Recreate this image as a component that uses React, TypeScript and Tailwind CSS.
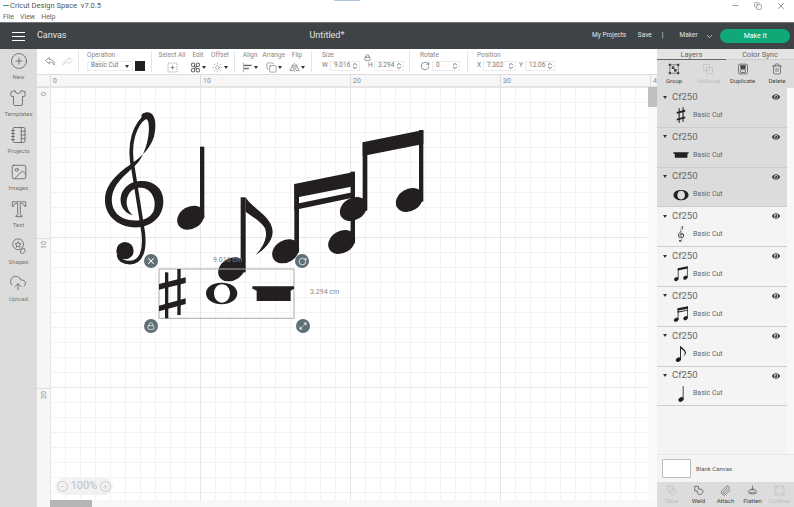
import type { ReactNode } from 'react'
import { ChevronDown, ChevronsUpDown, CirclePlus, CloudUpload, Copy, Image, Lock, Maximize2, Minus, NotebookTabs, Paperclip, Plus, RotateCw, Shirt, Trash2, X, Sun } from 'lucide-react'
import { FaEye } from 'react-icons/fa'

type IconProps = { className?: string; strokeWidth?: number }

const UndoOutline = ({ className, flip }: IconProps & { flip?: boolean }) => (
  <svg className={className} viewBox="0 0 16 16" fill="none" stroke="currentColor" strokeWidth="1">
    <path d={flip ? 'M14 6L9 2V4.5C5 4.5 2 7 2 12C4 9 6 8 9 8V10.5Z' : 'M2 6L7 2V4.5C11 4.5 14 7 14 12C12 9 10 8 7 8V10.5Z'} strokeLinejoin="round" />
  </svg>
)

const SelectAllIcon = ({ className }: IconProps) => (
  <svg className={className} viewBox="0 0 16 16" fill="none" stroke="currentColor">
    <rect x="1.5" y="1.5" width="13" height="13" strokeDasharray="2 1.5" strokeWidth="0.8" />
    <path d="M8 5V11M5 8H11" strokeWidth="1" />
  </svg>
)

const EditIcon = ({ className }: IconProps) => (
  <svg className={className} viewBox="0 0 16 16" fill="none" stroke="currentColor" strokeWidth="1.5">
    <circle cx="4.5" cy="4" r="2.5" />
    <circle cx="11.5" cy="4" r="2.5" />
    <circle cx="4.5" cy="12" r="2.5" />
    <circle cx="11.5" cy="12" r="2.5" />
    <path d="M6 6L10 10M10 6L6 10" />
  </svg>
)

const AlignIcon = ({ className }: IconProps) => (
  <svg className={className} viewBox="0 0 16 16" fill="none" stroke="currentColor">
    <path d="M2 1V15" strokeWidth="0.8" />
    <path d="M3 5H14" strokeWidth="2" />
    <path d="M3 9.5H10" strokeWidth="2" />
  </svg>
)

const FlipIcon = ({ className }: IconProps) => (
  <svg className={className} viewBox="0 0 16 16" fill="none" stroke="currentColor" strokeWidth="0.9">
    <path d="M6 3.5L1 12.5H6ZM10 3.5L15 12.5H10Z" strokeLinejoin="round" />
    <path d="M8 1V15" strokeDasharray="1.5 1.5" />
  </svg>
)

const TextIcon = ({ className }: IconProps) => (
  <svg className={className} viewBox="0 0 20 20" fill="none" stroke="currentColor" strokeWidth="0.8">
    <path d="M2.5 2H17.5V7H16C15.5 4.5 14.5 3.5 11.5 3.5V16C11.5 17 12 17.3 13.5 17.5V18.5H6.5V17.5C8 17.3 8.5 17 8.5 16V3.5C5.5 3.5 4.5 4.5 4 7H2.5Z" strokeLinejoin="round" />
  </svg>
)

const ShapesIcon = ({ className }: IconProps) => (
  <svg className={className} viewBox="0 0 20 20" fill="none" stroke="currentColor" strokeWidth="0.8">
    <circle cx="9" cy="8" r="6" />
    <path d="M9 5L10 7.2L12.3 7.5L10.6 9.1L11 11.4L9 10.3L7 11.4L7.4 9.1L5.7 7.5L8 7.2Z" />
    <path d="M12 14L16 12.5L17 15.5L14.5 18.5L11.5 17Z" strokeLinejoin="round" />
  </svg>
)

const GroupIcon = ({ className }: IconProps) => (
  <svg className={className} viewBox="0 0 16 16" fill="none" stroke="currentColor">
    <rect x="2.5" y="2.5" width="11" height="11" strokeWidth="0.8" />
    <path d="M1 1H4V4H1ZM12 1H15V4H12ZM1 12H4V15H1ZM12 12H15V15H12Z" fill="currentColor" stroke="none" />
    <rect x="5" y="4.5" width="3.5" height="3.5" fill="currentColor" stroke="none" />
    <rect x="8" y="8" width="3.5" height="3.5" fill="currentColor" stroke="none" />
  </svg>
)

const UngroupIcon = ({ className }: IconProps) => (
  <svg className={className} viewBox="0 0 16 16" fill="none" stroke="currentColor" strokeWidth="0.8">
    <rect x="2" y="2" width="8" height="8" />
    <rect x="6" y="6" width="8" height="8" />
  </svg>
)

const DuplicateIcon = ({ className }: IconProps) => (
  <svg className={className} viewBox="0 0 16 16" fill="none" stroke="currentColor" strokeWidth="0.9">
    <rect x="2" y="1.5" width="12" height="13" rx="2" />
    <rect x="5" y="3.5" width="6" height="4" fill="currentColor" />
    <rect x="5" y="9" width="6" height="3.5" />
  </svg>
)

const SliceIcon = ({ className }: IconProps) => (
  <svg className={className} viewBox="0 0 16 16" fill="none" stroke="currentColor" strokeWidth="0.9">
    <rect x="2" y="2" width="8" height="8" rx="1" />
    <circle cx="10" cy="10" r="4.5" />
  </svg>
)

const WeldIcon = ({ className }: IconProps) => (
  <svg className={className} viewBox="0 0 16 16" fill="none" stroke="currentColor" strokeWidth="1">
    <path d="M2.5 2H8V6H11C14 6 15 9 14 11C13 14 9 15 7.5 13C6.5 11.5 6 10 6 8.5H2.5Z" strokeLinejoin="round" />
  </svg>
)

const FlattenIcon = ({ className }: IconProps) => (
  <svg className={className} viewBox="0 0 16 16" fill="none" stroke="currentColor" strokeWidth="0.9">
    <path d="M8 1V7M6 5L8 7.5L10 5" />
    <ellipse cx="8" cy="9" rx="6" ry="2.2" />
    <path d="M2 11.5C3 13.5 13 13.5 14 11.5" />
  </svg>
)

const ContourIcon = ({ className }: IconProps) => (
  <svg className={className} viewBox="0 0 16 16" fill="none" stroke="currentColor" strokeWidth="0.9">
    <rect x="1.5" y="1.5" width="13" height="13" />
    <path d="M1.5 1.5L6 6M14.5 1.5L10 6M1.5 14.5L6 10M14.5 14.5L10 10" />
  </svg>
)

const Clef = () => (
  <g>
    <path d="M165 38C195 30 202 70 192 110C178 155 140 180 105 205C70 232 42 265 45 305C48 355 95 385 145 382C190 378 222 345 220 300C218 260 185 240 150 243C115 245 90 270 92 305C94 325 110 342 128 345C110 330 105 305 115 285C125 265 150 258 170 268C192 280 200 310 190 335C175 362 135 368 100 355C70 342 60 310 68 280C78 240 120 215 146 185C168 155 180 105 176 72C174 56 168 54 160 64C150 45 155 40 165 38Z" fill="#231f20" />
    <path d="M172 44C135 70 112 130 130 210L160 400C165 450 155 486 120 488C100 488 88 480 85 465" fill="none" stroke="#231f20" strokeWidth="11" />
    <circle cx="105" cy="452" r="26" fill="#231f20" />
  </g>
)

const Head = ({ cx, cy }: { cx: number; cy: number }) => (
  <ellipse cx={cx} cy={cy} rx="43" ry="33" transform={`rotate(-32 ${cx} ${cy})`} fill="#231f20" />
)

const Quarter = () => (
  <g>
    <rect x="330" y="140" width="13" height="215" fill="#231f20" />
    <Head cx={302} cy={353} />
  </g>
)

const Eighth = () => (
  <g>
    <rect x="452" y="292" width="15" height="225" fill="#231f20" />
    <path d="M467 292C480 320 548 350 548 395C548 425 520 450 497 465C520 440 535 410 525 385C515 365 480 345 467 335Z" fill="#231f20" />
    <Head cx={425} cy={508} />
  </g>
)

const Beam16 = () => (
  <g>
    <rect x="613" y="252" width="14" height="205" fill="#231f20" />
    <rect x="782" y="215" width="13" height="215" fill="#231f20" />
    <path d="M613 252L795 215V258L627 291V310L795 275V292L613 330Z" fill="#231f20" />
    <Head cx={587} cy={454} />
    <Head cx={755} cy={426} />
  </g>
)

const Beam8 = () => (
  <g>
    <rect x="818" y="127" width="14" height="205" fill="#231f20" />
    <rect x="987" y="90" width="13" height="215" fill="#231f20" />
    <path d="M818 127L1000 90V132L818 168Z" fill="#231f20" />
    <Head cx={790} cy={327} />
    <Head cx={958} cy={300} />
  </g>
)

const Sharp = () => (
  <g fill="#231f20">
    <rect x="225" y="517" width="10" height="138" />
    <rect x="262" y="507" width="10" height="138" />
    <path d="M207 552L287 532V549L207 569Z" />
    <path d="M207 617L287 595V612L207 634Z" />
  </g>
)

const OShape = () => (
  <path
    fillRule="evenodd"
    d="M348 580C348 560 370 548 395 548C420 548 442 560 442 580C442 600 420 613 395 613C370 613 348 600 348 580ZM372 580C372 595 382 608 396 608C410 608 420 595 420 580C420 565 410 553 396 553C382 553 372 565 372 580Z"
    fill="#231f20"
  />
)

const Cap = () => <path d="M487 559H612V566L602 572V603H500V572L487 566Z" fill="#231f20" />

const layers: { thumb: ReactNode; box: string; selected: boolean }[] = [
  { thumb: <Sharp />, box: '205 505 85 152', selected: true },
  { thumb: <Cap />, box: '485 520 130 122', selected: true },
  { thumb: <OShape />, box: '345 530 100 100', selected: true },
  { thumb: <Clef />, box: '40 30 185 465', selected: false },
  { thumb: <Beam8 />, box: '750 85 255 295', selected: false },
  { thumb: <Beam16 />, box: '545 210 255 285', selected: false },
  { thumb: <Eighth />, box: '385 290 165 255', selected: false },
  { thumb: <Quarter />, box: '260 138 85 255', selected: false },
]

const sideItems = [
  { label: 'New', icon: CirclePlus },
  { label: 'Templates', icon: Shirt },
  { label: 'Projects', icon: NotebookTabs },
  { label: 'Images', icon: Image },
  { label: 'Text', icon: TextIcon },
  { label: 'Shapes', icon: ShapesIcon },
  { label: 'Upload', icon: CloudUpload },
]

const panelActions = [
  { label: 'Group', icon: GroupIcon, off: false },
  { label: 'UnGroup', icon: UngroupIcon, off: true },
  { label: 'Duplicate', icon: DuplicateIcon, off: false },
  { label: 'Delete', icon: Trash2, off: false },
]

const bottomActions = [
  { label: 'Slice', icon: SliceIcon, off: true },
  { label: 'Weld', icon: WeldIcon, off: false },
  { label: 'Attach', icon: Paperclip, off: false },
  { label: 'Flatten', icon: FlattenIcon, off: false },
  { label: 'Contour', icon: ContourIcon, off: true },
]

function Stepper({ value, width }: { value: string; width: string }) {
  return (
    <div className={`flex h-[10px] items-center justify-between border border-[#ececec] pl-[3px] text-[6.5px] text-[#777] ${width}`}>
      <span>{value}</span>
      <ChevronsUpDown className="h-[8px] w-[8px] text-[#555]" strokeWidth={2.5} />
    </div>
  )
}

function Tool({ label, children, width }: { label: string; children: ReactNode; width: string }) {
  return (
    <div className={`flex flex-col items-center gap-[2px] ${width}`}>
      <span className="h-[9px] whitespace-nowrap text-[6.5px] leading-[9px] text-[#888]">{label}</span>
      <div className="flex h-[12px] items-center text-[#666]">{children}</div>
    </div>
  )
}

const Caret = () => <span className="ml-[1px] h-0 w-0 border-x-[2px] border-t-[3px] border-x-transparent border-t-[#333]" />

function Handle({ pos, children }: { pos: string; children: ReactNode }) {
  return (
    <div className={`absolute flex h-[14px] w-[14px] items-center justify-center rounded-full bg-[#5f6f78] text-white ${pos}`}>
      {children}
    </div>
  )
}

export default function App() {
  return (
    <div className="relative flex h-[507px] w-[794px] flex-col overflow-hidden bg-white font-[Roboto,sans-serif]">
      {/* window chrome */}
      <div className="absolute left-[334px] top-0 h-[1px] w-[26px] bg-[#a9c6de]" />
      <div className="flex h-[22px] flex-col px-[3px]">
        <div className="flex h-[13px] items-center">
          <span className="mr-[1px] h-[1px] w-[6px] bg-[#19a97b]" />
          <span className="whitespace-pre text-[7.5px] text-[#555]">Cricut Design Space  v7.0.5</span>
          <div className="ml-auto flex items-center gap-[14px] pr-[5px] text-[#555]">
            <Minus className="h-[9px] w-[9px]" strokeWidth={1.5} />
            <Copy className="h-[8px] w-[8px]" strokeWidth={1.5} />
            <X className="h-[10px] w-[10px]" strokeWidth={1.5} />
          </div>
        </div>
        <div className="flex gap-[6px] text-[7px] text-[#666]">
          <span>File</span>
          <span>View</span>
          <span>Help</span>
        </div>
      </div>

      {/* header */}
      <div className="flex h-[27px] items-center border-t border-[#777] bg-[#3e4347] pl-[12px] pr-[4px] text-[#e4e4e4]">
        <div className="flex h-[9px] w-[13px] flex-col justify-between">
          <span className="h-[1px] bg-white" />
          <span className="h-[1px] bg-white" />
          <span className="h-[1px] bg-white" />
        </div>
        <span className="ml-[12px] w-[274px] text-[9px]">Canvas</span>
        <span className="w-[284px] text-[9px]">Untitled*</span>
        <span className="w-[46px] text-[6.5px]">My Projects</span>
        <span className="w-[24px] text-[6.5px]">Save</span>
        <span className="w-[18px] text-[6.5px]">|</span>
        <span className="w-[26px] text-[6.5px]">Maker</span>
        <ChevronDown className="h-[9px] w-[9px]" />
        <button className="ml-[6px] h-[14px] w-[70px] rounded-full bg-[#0fa876] text-[7px] text-white">Make It</button>
      </div>

      <div className="flex min-h-0 flex-1">
        {/* left sidebar */}
        <div className="flex w-[37px] flex-col items-center bg-[#dcdcdc] pt-[3px]">
          {sideItems.map((item) => (
            <div key={item.label} className="flex h-[37px] flex-col items-center">
              <item.icon className="h-[18px] w-[18px] text-[#555]" strokeWidth={1} />
              <span className="mt-[3px] text-[6px] leading-[8px] text-[#777]">{item.label}</span>
            </div>
          ))}
        </div>

        {/* centre */}
        <div className="flex min-w-0 flex-1 flex-col">
          <div className="flex h-[26px] items-center border-b border-[#ddd] text-[7px]">
            <div className="flex h-[21px] w-[42px] items-center gap-[6px] border-r border-[#e4e4e4] pl-[7px]">
              <UndoOutline className="h-[12px] w-[12px] text-[#777]" />
              <UndoOutline flip className="h-[12px] w-[12px] text-[#ccc]" />
            </div>
            <div className="flex h-[21px] w-[73px] flex-col gap-[1px] border-r border-[#e4e4e4] pl-[8px]">
              <span className="h-[9px] text-[6.5px] leading-[9px] text-[#888]">Operation</span>
              <div className="flex items-center gap-[2px]">
                <div className="flex h-[10px] w-[46px] items-center justify-between border border-[#ececec] px-[3px] text-[6.5px] text-[#777]">
                  Basic Cut
                  <Caret />
                </div>
                <div className="h-[10px] w-[10px] bg-[#231f20]" />
              </div>
            </div>
            <div className="flex h-[21px] w-[83px] border-r border-[#e4e4e4] pl-[5px]">
              <Tool label="Select All" width="w-[30px]">
                <SelectAllIcon className="h-[11px] w-[11px]" />
              </Tool>
              <Tool label="Edit" width="w-[22px]">
                <EditIcon className="h-[11px] w-[11px]" />
                <Caret />
              </Tool>
              <Tool label="Offset" width="w-[22px]">
                <Sun className="h-[11px] w-[11px]" strokeWidth={1} />
                <Caret />
              </Tool>
            </div>
            <div className="flex h-[21px] w-[77px] border-r border-[#e4e4e4] pl-[5px]">
              <Tool label="Align" width="w-[20px]">
                <AlignIcon className="h-[11px] w-[11px]" />
                <Caret />
              </Tool>
              <Tool label="Arrange" width="w-[27px]">
                <Copy className="h-[11px] w-[11px]" strokeWidth={1.25} />
                <Caret />
              </Tool>
              <Tool label="Flip" width="w-[20px]">
                <FlipIcon className="h-[11px] w-[11px]" />
                <Caret />
              </Tool>
            </div>
            <div className="relative flex h-[21px] w-[98px] flex-col gap-[1px] border-r border-[#e4e4e4] pl-[10px]">
              <span className="h-[9px] text-[6.5px] leading-[9px] text-[#888]">Size</span>
              <div className="flex items-center text-[6.5px] text-[#777]">
                <span className="w-[8px]">W</span>
                <Stepper value="9.016" width="w-[30px]" />
                <span className="ml-[8px] w-[6px]">H</span>
                <Stepper value="3.294" width="w-[30px]" />
              </div>
              <Lock className="absolute left-[52px] top-[3px] h-[7px] w-[7px] text-[#555]" />
            </div>
            <div className="flex h-[21px] w-[58px] flex-col gap-[1px] border-r border-[#e4e4e4] pl-[10px]">
              <span className="h-[9px] text-[6.5px] leading-[9px] text-[#888]">Rotate</span>
              <div className="flex items-center gap-[2px]">
                <RotateCw className="h-[10px] w-[10px] text-[#555]" strokeWidth={1.5} />
                <Stepper value="0" width="w-[28px]" />
              </div>
            </div>
            <div className="flex h-[21px] flex-1 flex-col gap-[1px] pl-[9px]">
              <span className="h-[9px] text-[6.5px] leading-[9px] text-[#888]">Position</span>
              <div className="flex items-center text-[6.5px] text-[#777]">
                <span className="w-[6px]">X</span>
                <Stepper value="7.302" width="w-[33px]" />
                <span className="ml-[3px] w-[6px]">Y</span>
                <Stepper value="12.06" width="w-[30px]" />
              </div>
            </div>
          </div>

          {/* top ruler */}
          <div className="flex h-[12px] overflow-hidden border-b border-[#e4e4e4] bg-[#f6f6f6] pl-[13px] text-[7px] leading-[12px] text-[#888]">
            {['0', '10', '20', '30', '40'].map((n) => (
              <span key={n} className="w-[150px] shrink-0 border-l border-[#ddd] pl-[2px]">
                {n}
              </span>
            ))}
          </div>

          <div className="flex min-h-0 flex-1">
            {/* left ruler */}
            <div className="flex w-[13px] flex-col overflow-hidden bg-[#f6f6f6] text-[7px] text-[#888]">
              {['0', '10', '20'].map((n) => (
                <span key={n} className="h-[150.5px] shrink-0 border-t border-[#ddd] pt-[2px] text-center leading-[8px]">
                  <span className="inline-block -rotate-90">{n}</span>
                </span>
              ))}
            </div>

            <div className="flex min-w-0 flex-1 flex-col">
              <div className="flex min-h-0 flex-1">
                {/* canvas */}
                <div className="relative min-w-0 flex-1 overflow-hidden bg-white bg-[linear-gradient(#e6e6e6_1px,transparent_1px),linear-gradient(90deg,#e6e6e6_1px,transparent_1px),linear-gradient(#f3f3f3_1px,transparent_1px),linear-gradient(90deg,#f3f3f3_1px,transparent_1px)] bg-size-[150px_150px,150px_150px,15px_15px,15px_15px]">
                  <svg className="absolute left-[40px] top-[13px] h-[240px] w-[350px]" viewBox="0 0 1050 720">
                    <Clef />
                    <Quarter />
                    <Eighth />
                    <Beam16 />
                    <Beam8 />
                    <rect x="207" y="507" width="405" height="148" fill="none" stroke="#aaa" strokeWidth="3" />
                    <Sharp />
                    <OShape />
                    <Cap />
                  </svg>
                  <span className="absolute left-[163px] top-[168px] text-[7px] text-[#888]">9.016 cm</span>
                  <span className="absolute left-[260px] top-[200px] text-[7px] text-[#888]">3.294 cm</span>
                  <Handle pos="left-[94px] top-[167px]">
                    <X className="h-[10px] w-[10px]" strokeWidth={2.5} />
                  </Handle>
                  <Handle pos="left-[245px] top-[167px]">
                    <RotateCw className="h-[9px] w-[9px]" strokeWidth={2} />
                  </Handle>
                  <Handle pos="left-[94px] top-[232px]">
                    <Lock className="h-[8px] w-[8px]" strokeWidth={2} />
                  </Handle>
                  <Handle pos="left-[246px] top-[232px]">
                    <Maximize2 className="h-[8px] w-[8px]" strokeWidth={2.5} />
                  </Handle>
                  <div className="absolute bottom-[5px] left-[5px] flex h-[17px] w-[58px] items-center justify-between rounded-full bg-[#efefef]/80 px-[2px] text-[#c0c0c0]">
                    <span className="flex h-[11px] w-[11px] items-center justify-center rounded-full border border-[#ccc]">
                      <Minus className="h-[7px] w-[7px]" />
                    </span>
                    <span className="text-[11px]">100%</span>
                    <span className="flex h-[11px] w-[11px] items-center justify-center rounded-full border border-[#ccc]">
                      <Plus className="h-[7px] w-[7px]" />
                    </span>
                  </div>
                </div>
                <div className="w-[9px] bg-[#fafafa]">
                  <div className="h-[20px] bg-[#c0c0c0]" />
                </div>
              </div>
              <div className="h-[7px] bg-[#f8f8f8]">
                <div className="h-[7px] w-[42px] bg-[#b5b5b5]" />
              </div>
            </div>
          </div>
        </div>

        {/* right panel */}
        <div className="flex w-[137px] flex-col bg-[#f4f4f4]">
          <div className="flex h-[11px] bg-[#e4e4e4] text-[7.5px] leading-[11px] text-[#666]">
            <span className="w-[69px] border-b border-[#666] text-center">Layers</span>
            <span className="flex-1 border-b border-[#ccc] text-center">Color Sync</span>
          </div>
          <div className="flex h-[28px] bg-[#dcdcdc]">
            {panelActions.map((a) => (
              <div key={a.label} className={`flex w-[34.25px] flex-col items-center pt-[3px] ${a.off ? 'text-[#bbb]' : 'text-[#444]'}`}>
                <a.icon className="h-[12px] w-[12px]" strokeWidth={1.25} />
                <span className="mt-[2px] text-[6px] leading-[8px]">{a.label}</span>
              </div>
            ))}
          </div>
          <div className="flex min-h-0 flex-1">
            <div className="min-w-0 flex-1">
              {layers.map((l, i) => (
                <div
                  key={i}
                  className={`flex h-[39.8px] flex-col border-b border-[#ccc] pl-[6px] ${l.selected ? 'bg-[#dcdcdc]' : 'bg-[#f4f4f4]'}`}
                >
                  <div className="flex h-[18px] items-center">
                    <span className="h-0 w-0 border-x-[2px] border-t-[3px] border-x-transparent border-t-[#333]" />
                    <span className="ml-[5px] text-[9.5px] text-[#666]">Cf250</span>
                    <FaEye className="ml-auto mr-[7px] h-[8px] w-[8px] text-[#333]" />
                  </div>
                  <div className="mt-[1px] flex items-center">
                    <svg className="ml-[10px] h-[16px] w-[16px]" viewBox={l.box}>
                      {l.thumb}
                    </svg>
                    <span className="ml-[4px] text-[7px] text-[#666]">Basic Cut</span>
                  </div>
                </div>
              ))}
            </div>
            <div className="w-[7px] bg-[#f8f8f8]" />
          </div>
          <div className="flex h-[28px] items-center border-t border-[#e8e8e8] pl-[5px]">
            <div className="h-[19px] w-[29px] rounded-[1px] border border-[#bbb] bg-white" />
            <span className="ml-[5px] text-[6px] text-[#555]">Blank Canvas</span>
          </div>
          <div className="flex h-[25px] bg-[#dcdcdc] pl-[1px]">
            {bottomActions.map((a) => (
              <div key={a.label} className={`flex w-[27px] flex-col items-center pt-[3px] ${a.off ? 'text-[#bbb]' : 'text-[#444]'}`}>
                <a.icon className="h-[11px] w-[11px]" strokeWidth={1.25} />
                <span className="mt-[1px] text-[6px] leading-[8px]">{a.label}</span>
              </div>
            ))}
          </div>
        </div>
      </div>
    </div>
  )
}
